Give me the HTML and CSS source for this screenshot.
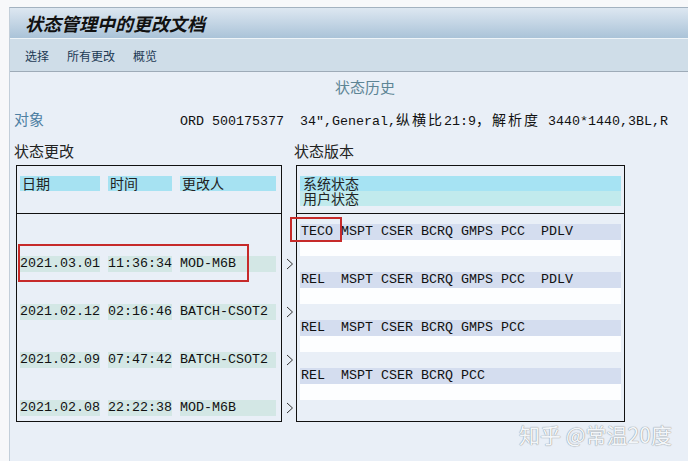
FILE: index.html
```html
<!DOCTYPE html>
<html lang="zh">
<head>
    <meta charset="UTF-8">
    <title>状态管理中的更改文档</title>
    <link rel="stylesheet" href="styles.css">
</head>
<body>

<div class="window">
    <!-- Title and menu -->
    <div class="titlebar">状态管理中的更改文档</div>
    <div class="menubar">
        <span>选择</span>
        <span>所有更改</span>
        <span>概览</span>
    </div>

    <div class="content">
        <div class="history">状态历史</div>

        <div class="object">
            <span class="object-label">对象</span>
            <span class="object-value mono">ORD 500175377  34″,General,<span class="cjk">纵横比</span>21:9<span class="cjk">，解析度</span> 3440*1440,3BL,R</span>
        </div>

        <div class="panels">
            <!-- Left: status changes -->
            <div class="panel panel-left">
                <div class="panel-title">状态更改</div>
                <div class="panel-body">
                    <div class="box">
                        <div class="box-head">
                            <div class="cols head-cols"><span>日期</span><span>时间</span><span>更改人</span></div>
                        </div>
                        <div class="box-rows">
                            <div class="change-row"><div class="cols mono"><span>2021.03.01</span><span>11:36:34</span><span>MOD-M6B</span></div></div>
                            <div class="change-row"><div class="cols mono"><span>2021.02.12</span><span>02:16:46</span><span>BATCH-CSOT2</span></div></div>
                            <div class="change-row"><div class="cols mono"><span>2021.02.09</span><span>07:47:42</span><span>BATCH-CSOT2</span></div></div>
                            <div class="change-row"><div class="cols mono"><span>2021.02.08</span><span>22:22:38</span><span>MOD-M6B</span></div></div>
                        </div>
                        <div class="mark mark-row"></div>
                    </div>
                    <div class="arrows">
                        <div class="arrow"><svg width="12" height="16" viewBox="0 0 12 16"><polyline points="5,3 10.5,8 5,13" fill="none" stroke="#333" stroke-width="1"/></svg></div>
                        <div class="arrow"><svg width="12" height="16" viewBox="0 0 12 16"><polyline points="5,3 10.5,8 5,13" fill="none" stroke="#333" stroke-width="1"/></svg></div>
                        <div class="arrow"><svg width="12" height="16" viewBox="0 0 12 16"><polyline points="5,3 10.5,8 5,13" fill="none" stroke="#333" stroke-width="1"/></svg></div>
                        <div class="arrow"><svg width="12" height="16" viewBox="0 0 12 16"><polyline points="5,3 10.5,8 5,13" fill="none" stroke="#333" stroke-width="1"/></svg></div>
                    </div>
                </div>
            </div>

            <!-- Right: status versions -->
            <div class="panel panel-right">
                <div class="panel-title">状态版本</div>
                <div class="box box-versions">
                    <div class="box-head">
                        <div class="head-band sys">系统状态</div>
                        <div class="head-band usr">用户状态</div>
                    </div>
                    <div class="box-rows">
                        <div class="version-row"><div class="sys-line mono">TECO MSPT CSER BCRQ GMPS PCC  PDLV</div><div class="usr-line"></div></div>
                        <div class="version-row"><div class="sys-line mono">REL  MSPT CSER BCRQ GMPS PCC  PDLV</div><div class="usr-line"></div></div>
                        <div class="version-row"><div class="sys-line mono">REL  MSPT CSER BCRQ GMPS PCC</div><div class="usr-line"></div></div>
                        <div class="version-row"><div class="sys-line mono">REL  MSPT CSER BCRQ PCC</div><div class="usr-line"></div></div>
                    </div>
                    <div class="mark mark-teco"></div>
                </div>
            </div>
        </div>
    </div>

    <div class="watermark">知乎 @常温20度</div>
</div>

</body>
</html>
```

FILE: styles.css
```css
body {
    margin: 0;
    background: #f7f8fa;
    font-family: "Noto Sans CJK SC", "Noto Sans", sans-serif;
    color: #222;
    overflow: hidden;
}
.window {
    position: relative;
    margin: 7px 0 0 9px;
    height: 454px;
    box-sizing: border-box;
    background: #e9eff7;
    border-top: 1px solid #a3b2c0;
    border-left: 1px solid #c3cfda;
}
.titlebar {
    height: 30px;
    line-height: 30px;
    padding-left: 15px;
    font-size: 18px;
    font-weight: bold;
    font-style: italic;
    color: #111;
    background: linear-gradient(to bottom, #dde7f1, #aac3d8);
    border-bottom: 1px solid #eef4f8;
}
.menubar {
    height: 32px;
    display: flex;
    align-items: center;
    gap: 18px;
    padding-left: 15px;
    font-size: 12px;
    color: #1d3a55;
    background: #cfdde8;
    border-bottom: 1px solid #9eabb8;
}
.content {
    padding-left: 4px;
}
.mono {
    font-family: "Liberation Mono", "Noto Sans CJK SC", monospace;
    font-size: 13.33px;
    color: #111;
    white-space: pre;
}
.cjk {
    font-family: "Noto Sans CJK SC", sans-serif;
    font-size: 14px;
    letter-spacing: 2px;
}
.history {
    margin-top: 6px;
    height: 18px;
    line-height: 18px;
    padding-left: 321px;
    font-size: 15px;
    color: #5d8595;
}
.object {
    margin-top: 13px;
    height: 20px;
    line-height: 20px;
    display: grid;
    grid-template-columns: 166px auto;
    white-space: nowrap;
}
.object-label {
    font-size: 15px;
    color: #4e80a3;
}
.object-value {
    overflow: hidden;
}
.panels {
    margin-top: 12px;
    display: flex;
}
.panel-left {
    width: 280px;
}
.panel-title {
    height: 20px;
    line-height: 20px;
    font-size: 15px;
    color: #222;
    margin-bottom: 4px;
}
.panel-body {
    display: flex;
}
.box {
    position: relative;
    margin-left: 2px;
    width: 266px;
    box-sizing: border-box;
    border: 1px solid #111;
}
.box-versions {
    width: 329px;
}
.box-head {
    height: 48px;
    box-sizing: border-box;
    padding: 10px 3px 0 3px;
    border-bottom: 1px solid #111;
}
.cols {
    display: grid;
    grid-template-columns: 80px 64px 96px;
    gap: 8px;
}
.cols span {
    display: block;
}
.head-cols span {
    height: 15px;
    line-height: 15px;
    font-size: 14px;
    padding-left: 2px;
    background: #a6e2f2;
}
.box-rows {
    padding: 10px 3px 5px 3px;
}
.change-row {
    height: 48px;
    padding-top: 32px;
    box-sizing: border-box;
}
.change-row .cols span {
    height: 16px;
    line-height: 16px;
    background: #d3e7e5;
}
.arrows {
    width: 12px;
    margin-top: 59px;
}
.arrow {
    height: 48px;
    padding-top: 32px;
    box-sizing: border-box;
}
.arrow svg {
    display: block;
}
.head-band {
    height: 15px;
    line-height: 15px;
    font-size: 14px;
    padding-left: 3px;
}
.head-band.sys {
    background: #a6e3f3;
}
.head-band.usr {
    background: #c1eaed;
}
.version-row {
    height: 48px;
}
.sys-line {
    height: 16px;
    line-height: 16px;
    padding-left: 1px;
    background: #d4ddef;
}
.usr-line {
    height: 16px;
    background: #fdfeff;
}
.mark {
    position: absolute;
    box-sizing: border-box;
    border: 2px solid #c62a2a;
}
.mark-row {
    left: 1px;
    top: 78px;
    width: 231px;
    height: 38px;
}
.mark-teco {
    left: -7px;
    top: 51px;
    width: 52px;
    height: 25px;
}
.watermark {
    position: absolute;
    left: 509px;
    top: 411px;
    font-size: 21px;
    color: #f3f6f9;
    text-shadow: 0 0 1px #8e959c, 0 0 1px #8e959c;
    white-space: nowrap;
}
```
